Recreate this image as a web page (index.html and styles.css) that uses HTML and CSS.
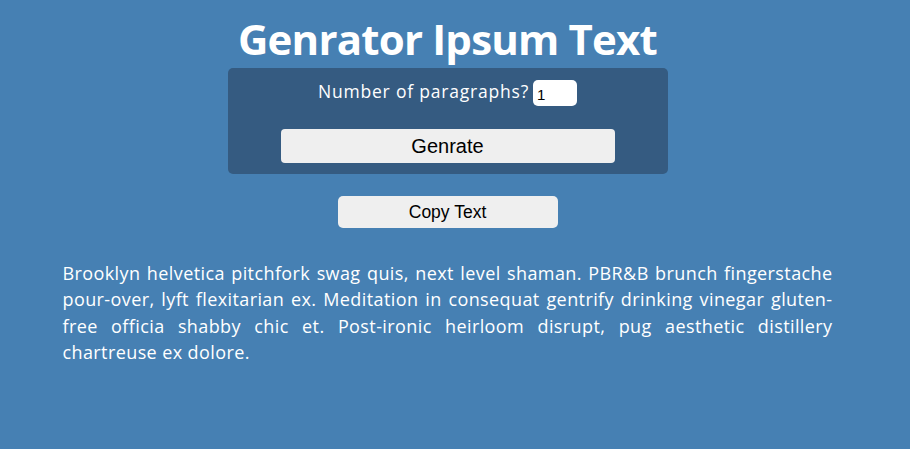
FILE: index.html
```html
<!DOCTYPE html>
<html>
<head>
<meta charset="utf-8">
<link rel="stylesheet" href="styles.css">
</head>
<body>
<div class="page">
  <h1 class="title">Genrator Ipsum Text</h1>
  <form class="panel">
    <div class="row">
      <label class="label" for="amount">Number of paragraphs?</label>
      <input class="amount" id="amount" type="text" value="1">
    </div>
    <button class="gen" type="button">Genrate</button>
  </form>
  <button class="copy" type="button">Copy Text</button>
  <p class="text">Brooklyn helvetica pitchfork swag quis, next level shaman. PBR&amp;B brunch fingerstache pour-over, lyft flexitarian ex. Meditation in consequat gentrify drinking vinegar gluten-free officia shabby chic et. Post-ironic heirloom disrupt, pug aesthetic distillery chartreuse ex dolore.</p>
</div>
</body>
</html>
```

FILE: styles.css
```css
html, body {
  margin: 0;
  padding: 0;
  background: #4680b3;
  height: 100%;
}
.page {
  width: 895px;
  display: flex;
  flex-direction: column;
  align-items: center;
  font-family: "Open Sans", sans-serif;
  color: #fff;
}
.title {
  margin: 11px 0 0 0;
  font-size: 42px;
  line-height: 56px;
  font-weight: 700;
  letter-spacing: -0.8px;
  height: 57px;
}
.panel {
  width: 440px;
  height: 106px;
  box-sizing: border-box;
  background: #355b81;
  border-radius: 5px;
  display: flex;
  flex-direction: column;
  align-items: center;
  padding-top: 12px;
}
.row {
  display: flex;
  align-items: center;
  gap: 4px;
  margin-left: 0;
}
.label {
  font-size: 17.5px;
  letter-spacing: 0.8px;
  line-height: 24px;
  margin-top: -4px;
  color: #fff;
}
.amount {
  width: 44px;
  height: 26px;
  box-sizing: border-box;
  border: none;
  border-radius: 5px;
  padding: 2px 4px 0;
  font-family: "Liberation Sans", Arial, sans-serif;
  font-size: 15px;
  color: #000;
  background: #fff;
}
.gen {
  margin-top: 23px;
  width: 334px;
  height: 34px;
  border: none;
  border-radius: 4px;
  background: #efefef;
  font-family: "Liberation Sans", Arial, sans-serif;
  font-size: 20px;
  color: #000;
  padding: 0;
}
.copy {
  margin-top: 22px;
  width: 220px;
  height: 32px;
  border: none;
  border-radius: 5px;
  background: #efefef;
  font-family: "Liberation Sans", Arial, sans-serif;
  font-size: 17.5px;
  color: #000;
  padding: 0;
}
.text {
  width: 770px;
  margin: 32px 0 0 0;
  font-size: 18px;
  letter-spacing: 0.4px;
  line-height: 26.3px;
  text-align: justify;
  color: #fff;
}
```
